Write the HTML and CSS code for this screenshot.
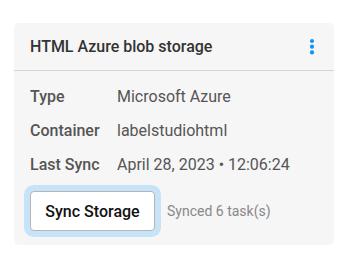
FILE: index.html
```html
<!DOCTYPE html>
<html>
<head>
<meta charset="utf-8">
<link rel="stylesheet" href="styles.css">
</head>
<body>
<div class="card">
  <div class="card-header">
    <div class="title">HTML Azure blob storage</div>
    <svg class="menu" width="6" height="18" viewBox="0 0 6 18" aria-hidden="true">
      <circle cx="3" cy="3" r="2.1"/>
      <circle cx="3" cy="8.7" r="2.1"/>
      <circle cx="3" cy="14.4" r="2.1"/>
    </svg>
  </div>
  <div class="card-body">
    <div class="row"><span class="label">Type</span><span class="value">Microsoft Azure</span></div>
    <div class="row"><span class="label">Container</span><span class="value">labelstudiohtml</span></div>
    <div class="row"><span class="label">Last Sync</span><span class="value">April 28, 2023 • 12:06:24</span></div>
    <div class="actions">
      <button class="btn">Sync Storage</button>
      <span class="status">Synced 6 task(s)</span>
    </div>
  </div>
</div>
</body>
</html>
```
FILE: styles.css
```css
html, body { margin: 0; padding: 0; background: #fff; }
body {
  font-family: Roboto, "Liberation Sans", sans-serif;
  padding: 23px 21px 26px 14px;
}
.card {
  width: 320px;
  background: #f6f6f6;
  border-radius: 5px;
}
.card-header {
  height: 48px;
  box-sizing: border-box;
  padding: 0 19px 0 16px;
  display: flex;
  align-items: center;
  justify-content: space-between;
  border-bottom: 1px solid #d5d5d5;
}
.title {
  font-size: 16px;
  font-weight: 500;
  color: #333;
}
.menu { fill: #0d95fb; display: block; margin-top: 1px; }
.card-body {
  padding: 8px 16px 14px;
}
.row {
  display: flex;
  height: 34px;
  align-items: center;
  font-size: 16px;
  color: #555;
}
.label { width: 87px; font-weight: 500; }
.value { font-weight: 400; }
.actions {
  display: flex;
  align-items: center;
  margin-top: 10px;
}
.btn {
  width: 125px;
  height: 40px;
  box-sizing: border-box;
  border: 1px solid #b5b5b5;
  border-radius: 4px;
  background: #fff;
  box-shadow: 0 0 0 6px #c6e3f8;
  font-family: Roboto, "Liberation Sans", sans-serif;
  font-size: 16px;
  font-weight: 500;
  color: #111;
  padding: 0;
}
.status {
  margin-left: 12px;
  font-size: 14px;
  color: #888;
}
```
